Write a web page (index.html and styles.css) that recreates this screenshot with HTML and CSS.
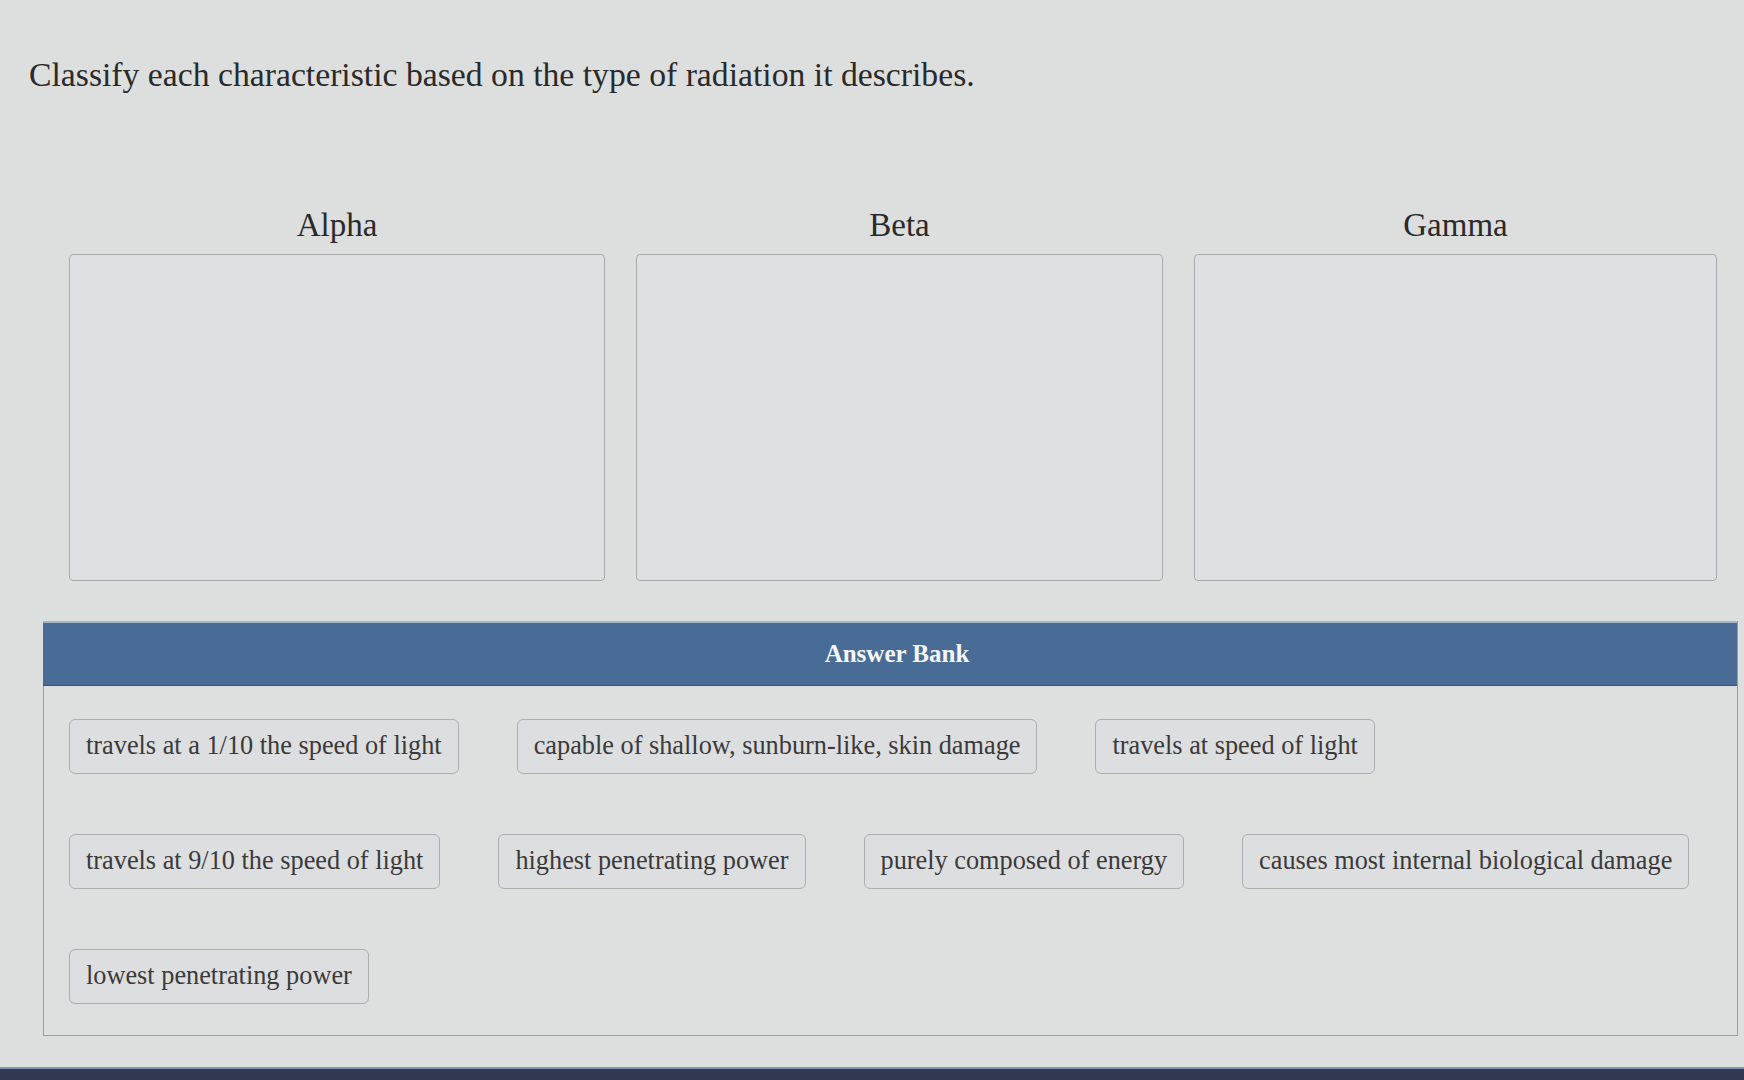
FILE: index.html
```html
<!DOCTYPE html>
<html lang="en">
<head>
<meta charset="utf-8">
<title>Classify radiation</title>
<link rel="stylesheet" href="styles.css">
</head>
<body>
<main class="page">
  <p class="prompt">Classify each characteristic based on the type of radiation it describes.</p>
  <section class="bins">
    <div class="bin">
      <div class="bin-label">Alpha</div>
      <div class="bin-drop"></div>
    </div>
    <div class="bin">
      <div class="bin-label">Beta</div>
      <div class="bin-drop"></div>
    </div>
    <div class="bin">
      <div class="bin-label">Gamma</div>
      <div class="bin-drop"></div>
    </div>
  </section>
  <section class="bank">
    <div class="bank-head">Answer Bank</div>
    <div class="bank-body">
      <div class="chip">travels at a 1/10 the speed of light</div>
      <div class="chip">capable of shallow, sunburn-like, skin damage</div>
      <div class="chip">travels at speed of light</div>
      <div class="chip">travels at 9/10 the speed of light</div>
      <div class="chip">highest penetrating power</div>
      <div class="chip">purely composed of energy</div>
      <div class="chip">causes most internal biological damage</div>
      <div class="chip">lowest penetrating power</div>
    </div>
  </section>
</main>
<footer class="taskbar"></footer>
</body>
</html>
```

FILE: styles.css
```css
html, body {
  margin: 0;
  padding: 0;
}
body {
  width: 1744px;
  height: 1080px;
  overflow: hidden;
  background: #dddede;
  font-family: "Liberation Serif", "Times New Roman", serif;
  color: #2e2e2e;
  display: flex;
  flex-direction: column;
}
.page {
  padding: 56px 6px 0 43px;
  flex: 1;
}
.prompt {
  margin: 0 0 0 -14px;
  font-size: 33.7px;
  line-height: 38px;
  color: #2a2a2a;
}
.bins {
  margin: 113px 0 0 26px;
  display: grid;
  grid-template-columns: 536px 527px 523px;
  column-gap: 31px;
}
.bin-label {
  text-align: center;
  font-size: 33px;
  line-height: 36px;
  margin-bottom: 11px;
  color: #2a2a2a;
}
.bin-drop {
  height: 325px;
  border: 1px solid #a9aaab;
  border-radius: 4px;
  background: #dfe0e1;
}
.bank {
  margin-top: 40px;
  border: 1px solid #9c9d9e;
  border-top: none;
}
.bank-head {
  height: 62px;
  line-height: 62px;
  background: #486c95;
  border-top: 2px solid #a3b5c7;
  border-bottom: 1px solid #574c57;
  color: #f4f6f8;
  text-align: center;
  font-weight: bold;
  font-size: 25px;
  padding-left: 14px;
  margin: 0 0 0 -1px;
}
.bank-body {
  display: flex;
  flex-wrap: wrap;
  column-gap: 58px;
  row-gap: 60px;
  padding: 33px 24px 31px 25px;
  background: #dedfdf;
}
.chip {
  font-size: 26.3px;
  line-height: 30px;
  padding: 11px 16px 12px 16px;
  border: 1px solid #adaeaf;
  border-radius: 6px;
  background: #dddedf;
  color: #3a3a3a;
  white-space: nowrap;
}
.taskbar {
  height: 11px;
  background: #2f3850;
  border-top: 2px solid #7f93b5;
}
```
